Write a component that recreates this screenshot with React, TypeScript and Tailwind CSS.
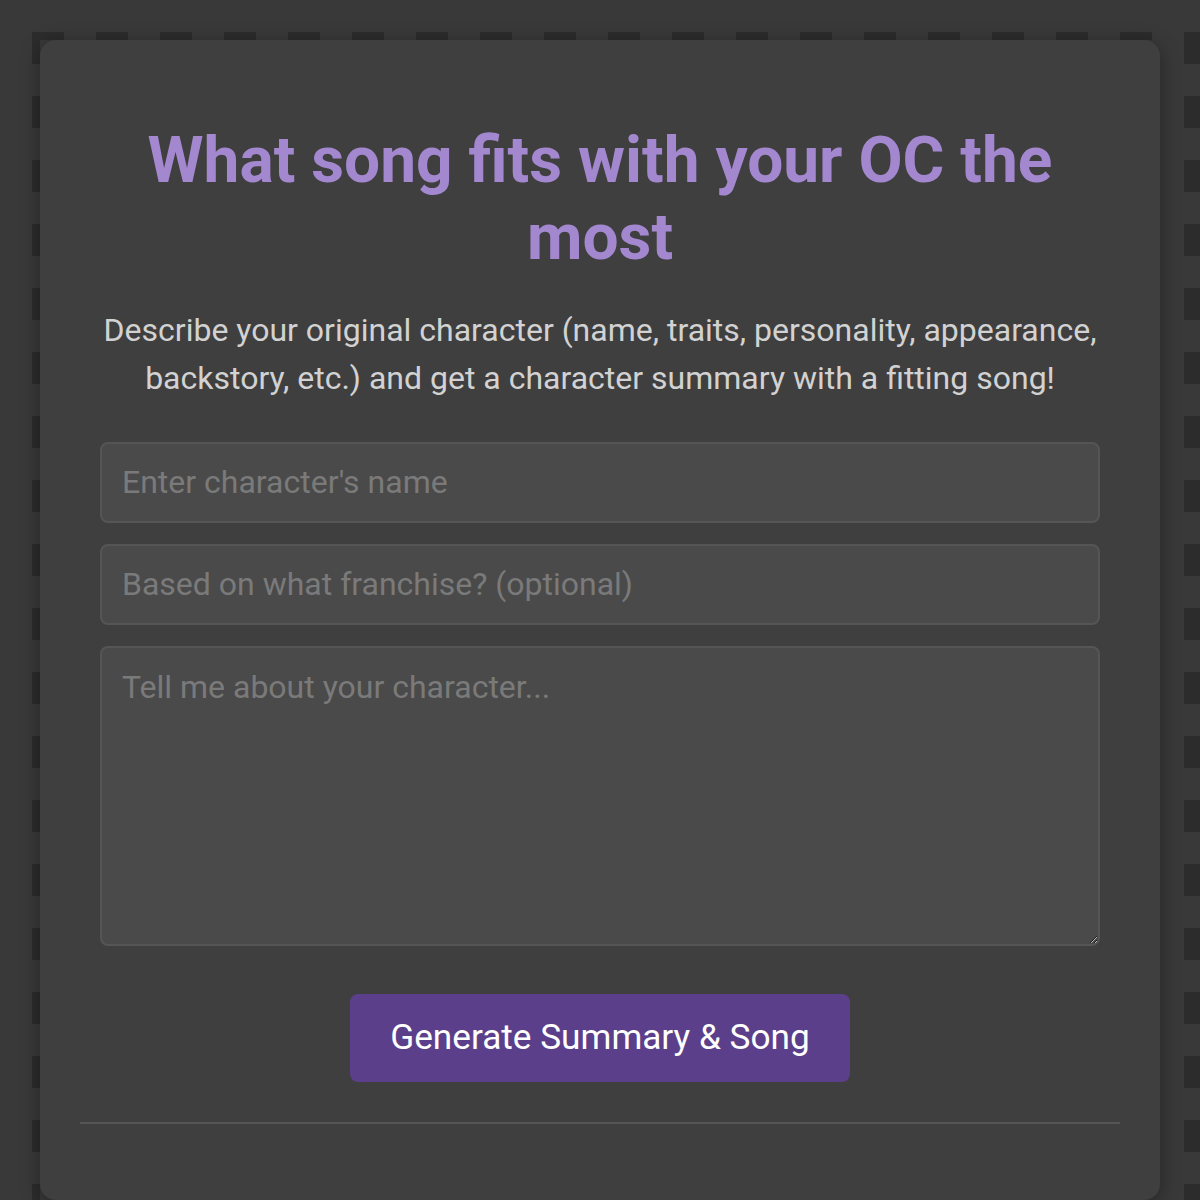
export default function App() {
  return (
    <div className="min-h-screen bg-[#393939] pl-8 pt-8 font-['Roboto',_'Liberation_Sans',_sans-serif]">
      {/* dashed frame drawn as background stripes */}
      <div className="pl-2 pt-2 pr-10 bg-no-repeat [background-image:repeating-linear-gradient(90deg,#2c2c2c_0_32px,transparent_32px_64px),repeating-linear-gradient(180deg,#2c2c2c_0_32px,transparent_32px_64px),repeating-linear-gradient(180deg,#2c2c2c_0_32px,transparent_32px_64px)] [background-size:100%_8px,8px_100%,16px_100%] [background-position:left_top,left_top,right_top]">
        <div className="rounded-2xl bg-[#3f3f3f] px-10 pt-10 pb-[76px] shadow-[0_4px_20px_rgba(0,0,0,0.35)]">
          <h1 className="mt-[43px] text-center text-[64px] font-bold leading-[1.2] text-[#a388cf]">
            What song fits with your OC the most
          </h1>
          <p className="mt-[29px] text-center text-[32px] leading-[48px] text-[#d2d2d2]">
            Describe your original character (name, traits, personality, appearance, backstory, etc.) and get a character summary with a fitting song!
          </p>

          <div className="mx-5 mt-10 flex flex-col gap-[21px]">
            <input
              type="text"
              placeholder="Enter character's name"
              className="h-[81px] rounded-lg border-2 border-[#555] bg-[#4a4a4a] px-5 text-[32px] text-[#e0e0e0] placeholder:text-[#7a7a7a] outline-none"
            />
            <input
              type="text"
              placeholder="Based on what franchise? (optional)"
              className="h-[81px] rounded-lg border-2 border-[#555] bg-[#4a4a4a] px-5 text-[32px] text-[#e0e0e0] placeholder:text-[#7a7a7a] outline-none"
            />
            <textarea
              placeholder="Tell me about your character..."
              className="h-[300px] rounded-lg border-2 border-[#555] bg-[#4a4a4a] px-5 py-5 text-[32px] leading-[1.2] text-[#e0e0e0] placeholder:text-[#7a7a7a] outline-none"
            />
          </div>

          <div className="mt-12 flex justify-center">
            <button className="h-[88px] w-[500px] rounded-lg bg-[#5b3f8a] text-[35.2px] text-white">
              Generate Summary &amp; Song
            </button>
          </div>

          <div className="mt-10 h-[2px] bg-[#555]" />
        </div>
      </div>
    </div>
  );
}
